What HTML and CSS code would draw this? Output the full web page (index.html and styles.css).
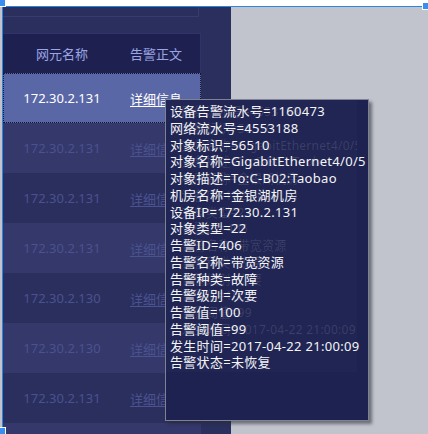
FILE: index.html
```html
<!DOCTYPE html>
<html lang="zh-CN">
<head>
<meta charset="utf-8">
<title>告警列表</title>
<link rel="stylesheet" href="styles.css">
</head>
<body>
<div class="topstrip"></div>
<div class="stage">
  <div class="panel">
    <div class="band"></div>
    <div class="table">
      <div class="thead">
        <div class="c1">网元名称</div>
        <div class="c2">告警正文</div>
      </div>
      <div class="row active"><div class="c1">172.30.2.131</div><div class="c2"><span class="link">详细信息</span></div></div>
      <div class="row odd"><div class="c1">172.30.2.131</div><div class="c2"><span class="link">详细信息</span></div></div>
      <div class="row even"><div class="c1">172.30.2.131</div><div class="c2"><span class="link">详细信息</span></div></div>
      <div class="row odd"><div class="c1">172.30.2.131</div><div class="c2"><span class="link">详细信息</span></div></div>
      <div class="row even"><div class="c1">172.30.2.130</div><div class="c2"><span class="link">详细信息</span></div></div>
      <div class="row odd"><div class="c1">172.30.2.130</div><div class="c2"><span class="link">详细信息</span></div></div>
      <div class="row even"><div class="c1">172.30.2.131</div><div class="c2"><span class="link">详细信息</span></div></div>
      <div class="row odd"></div>
    </div>
  </div>
</div>

<div class="frame">
  <span class="handle h-tl"></span>
  <span class="handle h-tr"></span>
  <span class="handle h-bl"></span>
</div>

<div class="tooltip">
  <div class="ghost">
    <div>网络流水号=4553188</div>
    <div>对象标识=56510</div>
    <div>对象名称=GigabitEthernet4/0/5</div>
    <div>对象描述=To:C-B02:Taobao</div>
    <div>机房名称=金银湖机房</div>
    <div>设备IP=172.30.2.131</div>
    <div>对象类型=22</div>
    <div>告警ID=406</div>
    <div>告警名称=带宽资源</div>
    <div>告警种类=故障</div>
    <div>告警级别=次要</div>
    <div>告警值=100</div>
    <div>告警阈值=99</div>
    <div>发生时间=2017-04-22 21:00:09</div>
  </div>
  <div class="lines">
    <div>设备告警流水号=1160473</div>
    <div>网络流水号=4553188</div>
    <div>对象标识=56510</div>
    <div>对象名称=GigabitEthernet4/0/5</div>
    <div>对象描述=To:C-B02:Taobao</div>
    <div>机房名称=金银湖机房</div>
    <div>设备IP=172.30.2.131</div>
    <div>对象类型=22</div>
    <div>告警ID=406</div>
    <div>告警名称=带宽资源</div>
    <div>告警种类=故障</div>
    <div>告警级别=次要</div>
    <div>告警值=100</div>
    <div>告警阈值=99</div>
    <div>发生时间=2017-04-22 21:00:09</div>
    <div>告警状态=未恢复</div>
  </div>
</div>
</body>
</html>
```
FILE: styles.css
```css
html, body {
  margin: 0;
  padding: 0;
}
body {
  width: 428px;
  height: 434px;
  overflow: hidden;
  background: #c1c4cc;
  font-family: "Noto Sans", "Noto Sans CJK SC", sans-serif;
  font-size: 13px;
  position: relative;
}
.topstrip {
  height: 6px;
  background: #ffffff;
}
.stage {
  padding: 1px 0 0 3px;
}
.panel {
  width: 228px;
  height: 427px;
  background: #2b2f5e;
  overflow: hidden;
}
.band {
  width: 196px;
  height: 10px;
  box-sizing: border-box;
  border-right: 1px solid #373b70;
  border-bottom: 1px solid #373b70;
}
.table {
  width: 198px;
  margin-top: 16px;
}
.thead, .row {
  display: grid;
  grid-template-columns: 118px 80px;
  align-items: center;
}
.thead {
  height: 40px;
  box-sizing: border-box;
  background: #1e2150;
  border-top: 1px solid #2f336a;
  border-right: 1px solid #2f336a;
  color: #9ba5e4;
}
.c1 {
  text-align: center;
}
.c2 {
  padding-left: 9px;
}
.row {
  height: 50px;
  color: #4a5290;
}
.row.odd {
  background: #34386a;
}
.row.even {
  background: #2b2f5e;
}
.row.active {
  background: #5a67a7;
  color: #ffffff;
  outline: 1px dotted #14162c;
  outline-offset: -1px;
}
.link {
  text-decoration: underline;
  text-underline-offset: 2px;
}

.frame {
  position: absolute;
  left: 2px;
  top: 6px;
  width: 425px;
  height: 424px;
  box-sizing: border-box;
  border-top: 1px solid #2a86e2;
  border-left: 1px solid #2a86e2;
  pointer-events: none;
}
.handle {
  position: absolute;
  width: 5px;
  height: 6px;
  background: #3a8ef2;
  border: 1px solid #ffffff;
}
.h-tl {
  left: -3px;
  top: -7px;
  border-left: 0;
  border-top: 0;
}
.h-tr {
  right: -2px;
  top: -5px;
}
.h-bl {
  left: -3px;
  bottom: -5px;
  border-left: 0;
}

.tooltip {
  position: absolute;
  left: 165px;
  top: 99px;
  width: 204px;
  height: 322px;
  box-sizing: border-box;
  background: #1d2251;
  border: 1px solid #7f8292;
  box-shadow: 3px 3px 3px rgba(40, 42, 55, 0.55);
  color: #f4f4f8;
  overflow: hidden;
  letter-spacing: 0.3px;
}
.lines {
  position: relative;
  padding: 3px 0 0 4px;
  line-height: 16.75px;
  white-space: nowrap;
}
.ghost {
  position: absolute;
  left: 0;
  top: 0;
  width: 191px;
  height: 272px;
  padding: 3px 0 0 4px;
  box-sizing: border-box;
  line-height: 16.75px;
  white-space: nowrap;
  overflow: hidden;
  color: rgba(255, 255, 255, 0.13);
  background: rgba(255, 255, 255, 0.015);
}
.ghost div {
  transform: scaleX(0.92);
  transform-origin: 144px 0;
}
```
